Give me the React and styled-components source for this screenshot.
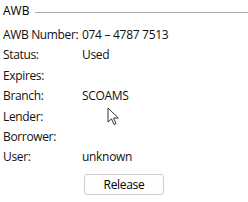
import React from "react";
import styled, { createGlobalStyle } from "styled-components";

const GlobalStyle = createGlobalStyle`
  html, body {
    margin: 0;
    padding: 0;
    background: #ffffff;
  }
  body {
    font-family: "Open Sans", "Noto Sans", sans-serif;
    font-size: 12px;
    color: #000000;
  }
`;

const Panel = styled.div`
  position: relative;
  width: 248px;
  height: 202px;
  padding: 1px 0 0 3px;
  box-sizing: border-box;
  overflow: hidden;
`;

const Legend = styled.div`
  display: flex;
  align-items: center;
  gap: 6px;
  height: 20px;
  line-height: 20px;
  margin-bottom: 4px;
`;

const Rule = styled.div`
  flex: 1;
  height: 1px;
  background: #a8a8a8;
  margin-top: 2px;
`;

const Fields = styled.div`
  display: grid;
  grid-template-columns: 79px 1fr;
  grid-auto-rows: 20.4px;
  line-height: 20px;
  color: #111;
`;

const Label = styled.span`
  white-space: nowrap;
  letter-spacing: -0.35px;
`;

const Value = styled.span`
  white-space: nowrap;
  letter-spacing: -0.3px;
`;

const Actions = styled.div`
  display: flex;
  padding: 0 0 0 81px;
  margin-top: 6px;
`;

const Button = styled.button`
  width: 80px;
  height: 21px;
  padding: 0;
  font-family: inherit;
  font-size: 12px;
  letter-spacing: -0.3px;
  color: #000;
  background: #fdfdfd;
  border: 1px solid #cfcfcf;
  border-radius: 3px;
  line-height: 19px;
`;

const Cursor = styled.svg`
  position: absolute;
  left: 107px;
  top: 107px;
`;

const rows = [
  ["AWB Number:", "074 – 4787 7513"],
  ["Status:", "Used"],
  ["Expires:", ""],
  ["Branch:", "SCOAMS"],
  ["Lender:", ""],
  ["Borrower:", ""],
  ["User:", "unknown"],
];

export default function App() {
  return (
    <>
      <GlobalStyle />
      <Panel>
        <Legend>
          <span>AWB</span>
          <Rule />
        </Legend>
        <Fields>
          {rows.map(([label, value]) => (
            <React.Fragment key={label}>
              <Label>{label}</Label>
              <Value>{value}</Value>
            </React.Fragment>
          ))}
        </Fields>
        <Actions>
          <Button>Release</Button>
        </Actions>
        <Cursor width="13" height="20" viewBox="0 0 13 20">
          <path
            d="M1 1 L1 15 L4.5 11.8 L7 17.5 L9 16.6 L6.6 11 L11.3 11 Z"
            fill="#ffffff"
            stroke="#333333"
            strokeWidth="1"
            strokeLinejoin="round"
          />
        </Cursor>
      </Panel>
    </>
  );
}
